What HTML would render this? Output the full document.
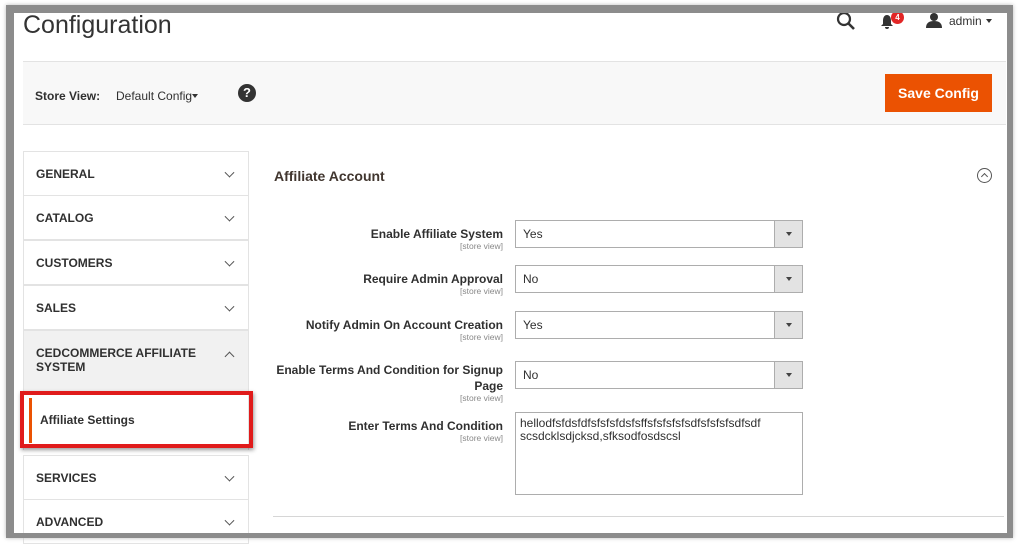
<!DOCTYPE html>
<html><head><meta charset="utf-8"><style>
*{margin:0;padding:0;box-sizing:border-box}
body{width:1024px;height:543px;background:#fff;font-family:"Liberation Sans",sans-serif;position:relative;overflow:hidden;color:#333}
.a{position:absolute}
.frame{left:6px;top:5px;width:1007px;height:533px;border:8px solid #8c8c8c;border-bottom-width:5px;border-right-width:6px;box-shadow:0 0 4px #bbb;z-index:10}
.nav{left:23px;width:226px;border:1px solid #e3e3e3;background:#fff;font-weight:bold;font-size:12px;color:#303030;padding:0 0 0 12px;display:flex;align-items:center}
.chev{position:absolute;right:15px;top:50%;width:7px;height:7px;border-right:1.5px solid #555;border-bottom:1.5px solid #555;transform:translateY(-70%) rotate(45deg)}
.lbl{right:521px;text-align:right;font-size:12px;font-weight:bold;color:#303030;line-height:16px}
.lbl small{display:block;font-size:8.5px;font-weight:normal;color:#888;line-height:9px}
.sel{left:515px;width:288px;height:28px;border:1px solid #adadad;font-size:12px;padding:6px 7px;color:#303030}
.sel:after{content:"";position:absolute;right:0;top:0;width:27px;height:26px;background:#e3e3e3;border-left:1px solid #adadad}
.sel i{position:absolute;right:10px;top:11px;border-left:3.5px solid transparent;border-right:3.5px solid transparent;border-top:4px solid #444;z-index:2}
</style></head><body>
<div class="a frame"></div>
<div class="a" style="left:23px;top:11px;font-size:25px;color:#333">Configuration</div>
<svg class="a" style="left:836px;top:11px" width="20" height="20" viewBox="0 0 20 20"><circle cx="8" cy="8" r="6" fill="none" stroke="#333" stroke-width="2.2"/><path d="M12.5 12.5L18 18" stroke="#333" stroke-width="2.6"/></svg>
<svg class="a" style="left:880px;top:14px" width="14" height="16" viewBox="0 0 14 16"><path d="M7 1C4 1 3 4 3 7v3L1 12h12l-2-2V7C11 4 10 1 7 1z M5 13a2 2 0 0 0 4 0z" fill="#333"/></svg>
<div class="a" style="left:891px;top:11px;width:13px;height:13px;border-radius:50%;background:#e22626;color:#fff;font-size:8px;font-weight:bold;text-align:center;line-height:13px">4</div>
<svg class="a" style="left:925px;top:12px" width="18" height="16" viewBox="0 0 18 16"><circle cx="9" cy="5" r="4" fill="#333"/><path d="M1 16c0-5 3-7 8-7s8 2 8 7z" fill="#333"/></svg>
<div class="a" style="left:949px;top:14px;font-size:12px;color:#333">admin</div>
<div class="a" style="left:986px;top:19px;border-left:3px solid transparent;border-right:3px solid transparent;border-top:4px solid #333"></div>
<div class="a" style="left:23px;top:61px;width:983px;height:64px;background:#f8f8f8;border-top:1px solid #e3e3e3;border-bottom:1px solid #e3e3e3"></div>
<div class="a" style="left:35px;top:89px;font-size:12px;font-weight:bold;color:#303030">Store View:</div>
<div class="a" style="left:116px;top:89px;font-size:12px;color:#303030">Default Config</div>
<div class="a" style="left:192px;top:94px;border-left:3.5px solid transparent;border-right:3.5px solid transparent;border-top:4px solid #333"></div>
<div class="a" style="left:238px;top:84px;width:18px;height:18px;border-radius:50%;background:#333;color:#fff;font-size:13px;font-weight:bold;text-align:center;line-height:18px">?</div>
<div class="a" style="left:885px;top:74px;width:107px;height:38px;background:#eb5202;color:#fff;font-size:14px;font-weight:bold;text-align:center;line-height:38px">Save Config</div>

<div class="a nav" style="top:151px;height:45px">GENERAL<span class="chev"></span></div>
<div class="a nav" style="top:195px;height:45px">CATALOG<span class="chev"></span></div>
<div class="a nav" style="top:240px;height:45px">CUSTOMERS<span class="chev"></span></div>
<div class="a nav" style="top:285px;height:45px">SALES<span class="chev"></span></div>
<div class="a nav" style="top:330px;height:65px;background:#f1f1f1;align-items:flex-start;padding-top:15px;line-height:14px">CEDCOMMERCE AFFILIATE<br>SYSTEM<span class="chev" style="top:22px;transform:rotate(225deg)"></span></div>
<div class="a" style="left:23px;top:395px;width:226px;height:55px;background:#fff;border-left:1px solid #e3e3e3;border-right:1px solid #e3e3e3"></div>
<div class="a" style="left:29px;top:398px;width:3px;height:45px;background:#eb5202"></div>
<div class="a" style="left:40px;top:413px;font-size:12px;font-weight:bold;color:#303030">Affiliate Settings</div>
<div class="a" style="left:20px;top:391px;width:233px;height:57px;border:4px solid #e01b1b;box-shadow:1px 2px 4px rgba(0,0,0,.4)"></div>
<div class="a nav" style="top:455px;height:45px">SERVICES<span class="chev"></span></div>
<div class="a nav" style="top:499px;height:45px">ADVANCED<span class="chev"></span></div>

<div class="a" style="left:274px;top:168px;font-size:14px;font-weight:bold;color:#41362f">Affiliate Account</div>
<div class="a" style="left:977px;top:168px;width:15px;height:15px;border:1px solid #555;border-radius:50%"></div>
<div class="a" style="left:982px;top:174px;width:5px;height:5px;border-left:1px solid #555;border-top:1px solid #555;transform:rotate(45deg)"></div>

<div class="a lbl" style="top:226px">Enable Affiliate System<small>[store view]</small></div>
<div class="a lbl" style="top:271px">Require Admin Approval<small>[store view]</small></div>
<div class="a lbl" style="top:317px">Notify Admin On Account Creation<small>[store view]</small></div>
<div class="a lbl" style="top:362px">Enable Terms And Condition for Signup<br>Page<small>[store view]</small></div>
<div class="a lbl" style="top:418px">Enter Terms And Condition<small>[store view]</small></div>

<div class="a sel" style="top:220px">Yes<i></i></div>
<div class="a sel" style="top:265px">No<i></i></div>
<div class="a sel" style="top:311px">Yes<i></i></div>
<div class="a sel" style="top:361px">No<i></i></div>
<div class="a" style="left:515px;top:412px;width:288px;height:83px;border:1px solid #adadad;font-size:12px;padding:4px 4px;line-height:13px;color:#303030">hellodfsfdsfdfsfsfsfdsfsffsfsfsfsfsdfsfsfsfsdfsdf<br>scsdcklsdjcksd,sfksodfosdscsl</div>
<div class="a" style="left:273px;top:516px;width:731px;height:1px;background:#d6d6d6"></div>
</body></html>
